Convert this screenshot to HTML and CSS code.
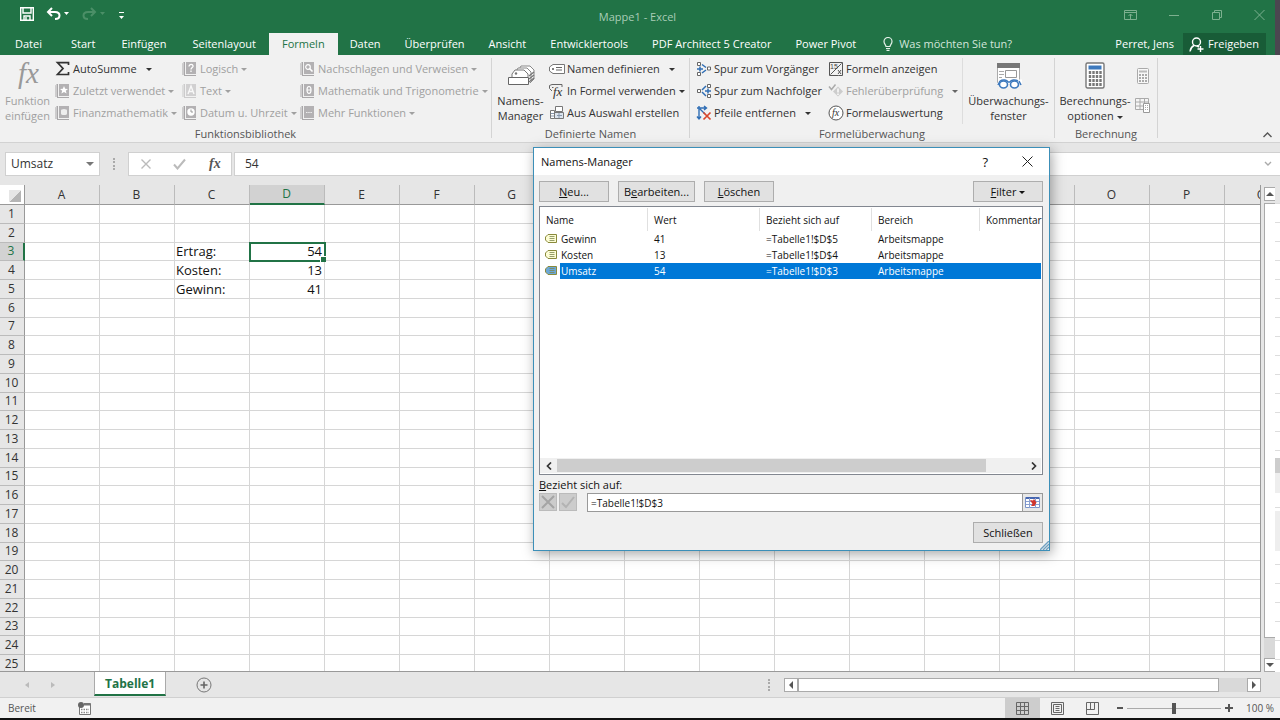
FILE: index.html
```html
<!DOCTYPE html>
<html lang="de">
<head>
    <meta charset="UTF-8">
    <meta name="viewport" content="width=device-width, initial-scale=1">
    <title>Mappe1 - Excel</title>
    <link rel="stylesheet" href="styles.css">
</head>
<body>

<svg class="defs" aria-hidden="true">
    <symbol id="book" viewBox="0 0 16 16">
        <path d="M2.500 1v14M1 2.500V14" stroke="#a9a7a9" fill="none"/>
        <path d="M1 2.500L2.500 1M2 14.500h12" stroke="#a9a7a9" fill="none"/>
        <path d="M4 1h10v12H4z" fill="#b3b1b3"/>
    </symbol>
    <symbol id="tag" viewBox="0 0 16 16">
        <path d="M4 3.500h11.500v9H4L.5 10V6z" fill="#fff" stroke="#777"/>
        <path d="M7 6.500h6M7 9h6" stroke="#666"/>
        <circle cx="4" cy="8" r="1" fill="#555"/>
    </symbol>
    <symbol id="name" viewBox="0 0 14 12">
        <path d="M4 1.500h8.500v8H4L1.500 7V4z" fill="currentColor" stroke="#8a8a3c"/>
        <path d="M5.500 3.500h5M5.500 5.500h5M5.500 7.500h5" stroke="#7c8650" stroke-width=".8"/>
    </symbol>
</svg>

<header class="title">
    <div class="quick">
        <button title="Speichern"><svg width="14" height="14" viewBox="0 0 14 14"><path d="M.7.700h12.600v12.600H.7z M3 1v5h8V1 M4 13V9h6v4 M6 10v3" fill="none" stroke="#fff" stroke-width="1.400"/></svg></button>
        <button title="Rückgängig"><svg width="24" height="14" viewBox="0 0 24 14"><path d="M6 1L2 5l4 4M2 5h7c6 0 6 7 0 7" fill="none" stroke="#fff" stroke-width="2"/><path d="M18 5h5l-2.500 3z" fill="#fff"/></svg></button>
        <button title="Wiederholen"><svg width="24" height="14" viewBox="0 0 24 14"><path d="M9 1l4 4-4 4M13 5H6c-6 0-6 7 0 7" fill="none" stroke="#4b8f67" stroke-width="2"/><path d="M18 5h5l-2.500 3z" fill="#4b8f67"/></svg></button>
        <button title="Anpassen"><svg width="7" height="8" viewBox="0 0 7 8"><path d="M1 .5h5" stroke="#fff"/><path d="M1 4h5L3.500 7z" fill="#fff"/></svg></button>
    </div>
    <h1>Mappe1 - Excel</h1>
    <div class="wincontrols">
        <button title="Menüband"><svg width="13" height="12" viewBox="0 0 13 12"><path d="M.5 1.500h12v9H.5zM.5 3.500h12M6.500 10V5M4.500 7l2-2 2 2" fill="none" stroke="#7db08f"/></svg></button>
        <button title="Minimieren"><svg width="11" height="12" viewBox="0 0 11 12"><path d="M0 6.500h10" stroke="#7db08f"/></svg></button>
        <button title="Wiederherstellen"><svg width="10" height="12" viewBox="0 0 10 12"><path d="M.5 3.500h7v7h-7zM2.500 3.500v-2h7v7h-2" fill="none" stroke="#7db08f"/></svg></button>
        <button title="Beenden"><svg width="11" height="12" viewBox="0 0 11 12"><path d="M.5 1l10 10M10.500 1l-10 10" stroke="#7db08f"/></svg></button>
    </div>
</header>

<nav class="tabs">
    <a href="#" class="file">Datei</a>
    <a href="#">Start</a>
    <a href="#">Einfügen</a>
    <a href="#">Seitenlayout</a>
    <a href="#" class="active">Formeln</a>
    <a href="#">Daten</a>
    <a href="#">Überprüfen</a>
    <a href="#">Ansicht</a>
    <a href="#">Entwicklertools</a>
    <a href="#">PDF Architect 5 Creator</a>
    <a href="#">Power Pivot</a>
    <a href="#" class="tell"><svg width="10" height="14" viewBox="0 0 10 14"><path d="M3 9.500C3 8 1 7 1 4.500a4 4 0 0 1 8 0C9 7 7 8 7 9.500zM3 11.500h4M3.500 13.300h3" fill="none" stroke="#e3f0e8" stroke-width="1.200"/></svg>Was möchten Sie tun?</a>
    <a href="#" class="user">Perret, Jens</a>
    <button class="share"><svg width="15" height="15" viewBox="0 0 15 15"><circle cx="7.500" cy="5" r="4" fill="none" stroke="#fff" stroke-width="1.400"/><path d="M1 14.500C1.500 11 3 9.500 5 8.500M8 9l2 1M11.500 9v6M8.500 12h6" fill="none" stroke="#fff" stroke-width="1.400"/></svg>Freigeben</button>
</nav>

<div class="ribbon">
    <section class="group library">
        <div class="items">
            <button class="big off">
                <svg width="26" height="30" viewBox="0 0 26 30"><text x="3" y="22" class="fx-big">fx</text></svg>
                <span>Funktion<br>einfügen</span>
            </button>
            <div class="col c1">
                <button class="cmd"><svg viewBox="0 0 16 16"><path d="M13.500 4V1.700H2.500L8 7.500l-5.500 6h11V11" fill="none" stroke="#333" stroke-width="1.700"/></svg>AutoSumme<i class="far"></i></button>
                <button class="cmd off"><svg viewBox="0 0 16 16"><use href="#book"/><path d="M9 3l1.200 2.700 2.800.2-2.200 1.800.8 2.800L9 9l-2.600 1.500.8-2.800L5 5.900l2.800-.2z" fill="#fff"/></svg>Zuletzt verwendet<i></i></button>
                <button class="cmd off"><svg viewBox="0 0 16 16"><use href="#book"/><path d="M6 5.500a3 1.500 0 0 1 6 0v3a3 1.500 0 0 1-6 0z" fill="#eee"/></svg>Finanzmathematik<i></i></button>
            </div>
            <div class="col c2">
                <button class="cmd off"><svg viewBox="0 0 16 16"><use href="#book"/><path d="M7 5.500c0-3 4.500-2.500 4 0-.3 1-2 1.300-2 3M9 9.500v1.500" fill="none" stroke="#fff" stroke-width="1.300"/></svg>Logisch<i></i></button>
                <button class="cmd off"><svg viewBox="0 0 16 16" opacity=".5"><use href="#book"/><path d="M6 11l3-8 3 8M7 8.500h4" fill="none" stroke="#fff" stroke-width="1.400"/></svg>Text<i></i></button>
                <button class="cmd off"><svg viewBox="0 0 16 16"><use href="#book"/><circle cx="9" cy="7" r="3.700" fill="#fff"/><path d="M9 4.500V7h2" fill="none" stroke="#999"/></svg>Datum u. Uhrzeit<i></i></button>
            </div>
            <div class="col">
                <button class="cmd off"><svg viewBox="0 0 16 16"><use href="#book"/><circle cx="8" cy="6" r="2.300" fill="none" stroke="#fff" stroke-width="1.200"/><path d="M9.500 7.500l3 3" stroke="#fff" stroke-width="1.600"/></svg>Nachschlagen und Verweisen<i></i></button>
                <button class="cmd off"><svg viewBox="0 0 16 16"><use href="#book"/><ellipse cx="9" cy="7" rx="2" ry="3.500" fill="none" stroke="#fff" stroke-width="1.200"/><path d="M7 7h4" stroke="#fff"/></svg>Mathematik und Trigonometrie<i></i></button>
                <button class="cmd off"><svg viewBox="0 0 16 16"><use href="#book"/><path d="M6 7.500h6" stroke="#eee" stroke-width="1.200" stroke-dasharray="1.500 .7"/></svg>Mehr Funktionen<i></i></button>
            </div>
        </div>
        <h2>Funktionsbibliothek</h2>
    </section>

    <section class="group names">
        <div class="items">
            <button class="big">
                <svg width="28" height="30" viewBox="0 0 28 30"><path d="M11 10l3-5h9l4 4v9l-4 4" fill="#fff" stroke="#888"/><path d="M8 12l3-5h9l4 4v9" fill="#fff" stroke="#888"/><path d="M5 16v-3l3-4h9l4 4v3" fill="#fff" stroke="#777"/><path d="M22 15l5-4M22 18l5-4M22 21l5-4" stroke="#777" stroke-width="1.400"/><path d="M1.500 16.500h20v7h-20z" fill="#fff" stroke="#666"/><circle cx="9" cy="12.500" r="1.200" fill="#777"/></svg>
                <span>Namens-<br>Manager</span>
            </button>
            <div class="col">
                <button class="cmd"><svg viewBox="0 0 16 16"><use href="#tag"/></svg>Namen definieren<i class="far"></i></button>
                <button class="cmd"><svg viewBox="0 0 16 16"><path d="M3 8L.5 5.500v-3L3 1.500h10V4M3 4.500h1.500" fill="none" stroke="#666"/><text x="4" y="13" class="fx">fx</text></svg>In Formel verwenden<i></i></button>
                <button class="cmd"><svg viewBox="0 0 16 16"><path d="M6.500 1.500h7v5h-7zM1.500 5.500h4v8h-4z" fill="#fff" stroke="#777"/><path d="M5.500 7.500h9v6h-9z" fill="#dce4ee" stroke="#777"/><path d="M2 8.500h3M2 11h3M8 10.500h5M10 8v5" stroke="#8898ad"/></svg>Aus Auswahl erstellen</button>
            </div>
        </div>
        <h2>Definierte Namen</h2>
    </section>

    <section class="group audit">
        <div class="items">
            <div class="col c3">
                <button class="cmd"><svg viewBox="0 0 16 16"><path d="M1.500 1.500h3v3h-3zM1.500 11.500h3v3h-3zM11.500 6h3v3h-3z" fill="#fff" stroke="#666"/><path d="M1 8h6M4 5.500v5M6 3.500l4 3M6 12l4-3" stroke="#2f6eb5" stroke-width="1.500"/></svg>Spur zum Vorgänger</button>
                <button class="cmd"><svg viewBox="0 0 16 16"><path d="M1.500 6.500h3v3h-3zM11.500 1.500h3v3h-3zM11.500 11.500h3v3h-3z" fill="#fff" stroke="#666"/><path d="M9 8h6M12 5.500v5M6 7l4-4M6 9l4 4" stroke="#2f6eb5" stroke-width="1.500"/></svg>Spur zum Nachfolger</button>
                <button class="cmd"><svg viewBox="0 0 16 16"><path d="M1 3h9M8 1l2.500 2L8 5M3 1v13M1 11.500L3 14l2-2.500M4 4l5 5" fill="none" stroke="#2f6eb5" stroke-width="1.400"/><path d="M7.500 7.500l7 7M14.500 7.500l-7 7" stroke="#d9472b" stroke-width="1.700"/></svg>Pfeile entfernen<i class="far"></i></button>
            </div>
            <div class="col c4">
                <button class="cmd"><svg viewBox="0 0 16 16"><path d="M1.500 1.500h13v13h-4M1.500 1.500v13h9M2.500 13.500l11-11" fill="none" stroke="#555"/><text x="2" y="8" class="tiny">15</text><path d="M10 9l3 4M13 9l-3 4" stroke="#555"/></svg>Formeln anzeigen</button>
                <button class="cmd off"><svg viewBox="0 0 16 16"><path d="M10 3.500l5 5-5 5-5-5z" fill="#ccc"/><path d="M10 5.500v4M10 10.500v1.500" stroke="#fff" stroke-width="1.400"/><path d="M1 3.500l2.500 3 4-5" fill="none" stroke="#aaa" stroke-width="1.500"/></svg>Fehlerüberprüfung<i class="far dark"></i></button>
                <button class="cmd"><svg viewBox="0 0 16 16"><circle cx="8" cy="8" r="7" fill="#fff" stroke="#555"/><text x="4" y="11" class="fx small">fx</text></svg>Formelauswertung</button>
            </div>
            <button class="big watch">
                <svg width="28" height="30" viewBox="0 0 28 30"><path d="M2.500 3.500h22v18h-22z" fill="#fff" stroke="#aaa"/><path d="M2 2h23v5H2z" fill="#777"/><path d="M4 10.500h5M4 13.500h5M4 16.500h3" stroke="#aaa"/><path d="M10.500 9.500h11v7h-11z" fill="#fff" stroke="#999"/><path d="M3 20.500h24" stroke="#fff" stroke-width="4"/><path d="M5 20c3-2 7-1 8 1h2c1-2 5-3 8-1M5 20l-2 4M26 24l-2-4" fill="none" stroke="#3d79bd" stroke-width="1.500"/><ellipse cx="8.500" cy="23.500" rx="4" ry="3.500" fill="#fff" stroke="#3d79bd" stroke-width="1.600"/><ellipse cx="19.500" cy="23.500" rx="4" ry="3.500" fill="#fff" stroke="#3d79bd" stroke-width="1.600"/></svg>
                <span>Überwachungs-<br>fenster</span>
            </button>
        </div>
        <h2>Formelüberwachung</h2>
    </section>

    <section class="group calc">
        <div class="items">
            <button class="big">
                <svg width="20" height="30" viewBox="0 0 20 30"><rect x="1" y="2" width="18" height="25" rx="1.500" fill="#fff" stroke="#777" stroke-width="1.400"/><path d="M3.500 4.500h13v4h-13z" fill="#3d79bd"/><path d="M5 10v15M8.500 10v15M12 10v15M15.500 10v15" stroke="#777" stroke-width="2.400" stroke-dasharray="3 1"/></svg>
                <span>Berechnungs-<br>optionen<i></i></span>
            </button>
            <div class="col minis">
                <button title="Neu berechnen"><svg width="12" height="16" viewBox="0 0 12 16"><rect x=".5" y=".5" width="11" height="15" rx="1" fill="#f8f8f8" stroke="#aaa"/><path d="M2 3.500h8" stroke="#bbb" stroke-width="2"/><path d="M3 6v8M6 6v8M9 6v8" stroke="#aaa" stroke-width="2" stroke-dasharray="2 1"/></svg></button>
                <button title="Blatt berechnen"><svg width="15" height="15" viewBox="0 0 15 15"><path d="M.5.500h13v11H.5zM.5 4h13M5 .5v11M9.500.500v11M.5 8h13" fill="#f5f5f5" stroke="#aaa"/><path d="M8.500 5.500h6v9h-6z" fill="#fff" stroke="#999"/><path d="M10.500 7v6M12.500 7v6" stroke="#aaa" stroke-dasharray="1 1"/></svg></button>
            </div>
        </div>
        <h2>Berechnung</h2>
    </section>
    <button class="collapse" title="Menüband reduzieren"><svg width="9" height="6" viewBox="0 0 9 6"><path d="M.5 5l4-4 4 4" fill="none" stroke="#555" stroke-width="1.400"/></svg></button>
</div>

<div class="formulabar">
    <div class="namebox">
        <input type="text" value="Umsatz" aria-label="Namenfeld"><i></i>
    </div>
    <span class="dots"></span>
    <div class="fbuttons">
        <button title="Abbrechen"><svg width="12" height="12" viewBox="0 0 12 12"><path d="M1.500 1.500l9 9M10.500 1.500l-9 9" stroke="#bbb" stroke-width="1.400"/></svg></button>
        <button title="Eingeben"><svg width="13" height="12" viewBox="0 0 13 12"><path d="M1 6.500l3.500 4L12 1.500" fill="none" stroke="#bbb" stroke-width="2"/></svg></button>
        <button title="Funktion einfügen"><svg width="14" height="16" viewBox="0 0 14 16"><text x="2" y="12" class="fx strong">fx</text></svg></button>
    </div>
    <div class="formula">
        <input type="text" value="54" aria-label="Bearbeitungsleiste">
        <svg width="8" height="6" viewBox="0 0 8 6"><path d="M1 1l3 3 3-3" fill="none" stroke="#aaa" stroke-width="1.400"/></svg>
    </div>
</div>

<main class="sheet">
    <div class="cells">
        <table id="grid"></table>
    </div>
    <div class="vscroll">
        <button title="Nach oben"><svg width="8" height="4" viewBox="0 0 8 4"><path d="M0 4h8L4 0z" fill="#555"/></svg></button>
        <div class="thumb"></div>
        <div class="track"></div>
        <button title="Nach unten"><svg width="8" height="4" viewBox="0 0 8 4"><path d="M0 0h8L4 4z" fill="#555"/></svg></button>
    </div>
    <div class="behind"></div>
</main>

<div class="sheettabs">
    <button class="nav" title="Zurück"><svg width="4" height="6" viewBox="0 0 4 6"><path d="M4 0v6L0 3z" fill="#bbb"/></svg></button>
    <button class="nav" title="Weiter"><svg width="4" height="6" viewBox="0 0 4 6"><path d="M0 0v6l4-3z" fill="#bbb"/></svg></button>
    <a href="#" class="current">Tabelle1</a>
    <button class="add" title="Neues Blatt"><svg width="16" height="16" viewBox="0 0 16 16"><circle cx="8" cy="8" r="7" fill="none" stroke="#777"/><path d="M8 4.500v7M4.500 8h7" stroke="#666" stroke-width="1.600"/></svg></button>
    <span class="dots"></span>
    <div class="hscroll">
        <button title="Nach links"><svg width="4" height="8" viewBox="0 0 4 8"><path d="M4 0v8L0 4z" fill="#555"/></svg></button>
        <div class="thumb"></div>
        <div class="track"></div>
        <button title="Nach rechts"><svg width="4" height="8" viewBox="0 0 4 8"><path d="M0 0v8l4-4z" fill="#555"/></svg></button>
    </div>
</div>

<footer class="status">
    <span>Bereit</span>
    <svg class="macro" width="13" height="13" viewBox="0 0 13 13"><path d="M1.500 5v7.500h11V1.500H6" fill="#fff" stroke="#777"/><path d="M6 2.500h6.500" stroke="#777" stroke-width="2"/><path d="M3 7.500h8M3 10.500h8" stroke="#888" stroke-width="1.500" stroke-dasharray="1.500 1"/><circle cx="3" cy="3" r="3" fill="#666"/></svg>
    <div class="views">
        <button class="on" title="Normal"><svg width="13" height="13" viewBox="0 0 13 13"><path d="M.5.500h12v12H.5zM.5 4.500h12M.5 8.500h12M4.500.500v12M8.500.500v12" fill="none" stroke="#666"/></svg></button>
        <button title="Seitenlayout"><svg width="13" height="13" viewBox="0 0 13 13"><path d="M.5.500h12v12H.5zM2.500 2.500h8v8h-8zM4.500 4.500h4M4.500 6.500h4M4.500 8.500h4" fill="none" stroke="#666"/></svg></button>
        <button title="Umbruchvorschau"><svg width="13" height="13" viewBox="0 0 13 13"><path d="M.5.500h12v12H.5zM4.500.500v7M8.500.500v7M.5 7.500h8" fill="none" stroke="#666"/></svg></button>
    </div>
    <button class="zoom" title="Verkleinern"><svg width="7" height="8" viewBox="0 0 7 8"><path d="M1 4h6" stroke="#555" stroke-width="2"/></svg></button>
    <input class="slider" type="range" min="0" max="100" value="50" aria-label="Zoom">
    <button class="zoom" title="Vergrößern"><svg width="8" height="8" viewBox="0 0 8 8"><path d="M0 4h8M4 0v8" stroke="#555" stroke-width="2"/></svg></button>
    <span class="percent">100 %</span>
</footer>

<div class="dialog" role="dialog" aria-label="Namens-Manager">
    <div class="dhead">
        <span>Namens-Manager</span>
        <button class="help" title="Hilfe">?</button>
        <button title="Schließen"><svg width="11" height="11" viewBox="0 0 11 11"><path d="M.5.500l10 10M10.500.500l-10 10" stroke="#222"/></svg></button>
    </div>
    <div class="dbody">
        <div class="dbuttons">
            <button class="btn"><u>N</u>eu...</button>
            <button class="btn wide">B<u>e</u>arbeiten...</button>
            <button class="btn"><u>L</u>öschen</button>
            <button class="btn filter"><u>F</u>ilter<i></i></button>
        </div>
        <div class="list">
            <table>
                <thead>
                    <tr><th class="w1">Name</th><th class="w2">Wert</th><th class="w2">Bezieht sich auf</th><th class="w1">Bereich</th><th>Kommentar</th></tr>
                </thead>
                <tbody>
                    <tr><td><svg width="14" height="12"><use href="#name"/></svg><span>Gewinn</span></td><td>41</td><td>=Tabelle1!$D$5</td><td>Arbeitsmappe</td><td></td></tr>
                    <tr><td><svg width="14" height="12"><use href="#name"/></svg><span>Kosten</span></td><td>13</td><td>=Tabelle1!$D$4</td><td>Arbeitsmappe</td><td></td></tr>
                    <tr class="sel"><td><svg width="14" height="12"><use href="#name"/></svg><span>Umsatz</span></td><td>54</td><td>=Tabelle1!$D$3</td><td>Arbeitsmappe</td><td></td></tr>
                </tbody>
            </table>
            <div class="dscroll">
                <svg width="6" height="8" viewBox="0 0 6 8"><path d="M5 .5L1.500 4 5 7.500" fill="none" stroke="#333" stroke-width="1.700"/></svg>
                <div class="thumb"></div>
                <svg width="6" height="8" viewBox="0 0 6 8"><path d="M1 .5L4.500 4 1 7.500" fill="none" stroke="#333" stroke-width="1.700"/></svg>
            </div>
        </div>
        <label for="ref"><u>B</u>ezieht sich auf:</label>
        <div class="refrow">
            <button class="sq" disabled title="Verwerfen"><svg width="14" height="14" viewBox="0 0 14 14"><path d="M1 1l12 12M13 1L1 13" stroke="#a4a4a4" stroke-width="2"/></svg></button>
            <button class="sq" disabled title="Übernehmen"><svg width="14" height="14" viewBox="0 0 14 14"><path d="M1 8l4 4 8-10" fill="none" stroke="#b3b3b3" stroke-width="2"/></svg></button>
            <div class="ref">
                <input id="ref" type="text" value="=Tabelle1!$D$3">
                <button title="Bereich wählen"><svg width="15" height="13" viewBox="0 0 15 13"><path d="M.5 1.500h14v10H.5z" fill="#fff" stroke="#7b93c9"/><path d="M1 2h13" stroke="#4666b0" stroke-width="2"/><path d="M1 5.500h13M1 8.500h13M4.500 2v10M10.500 2v10" stroke="#8aa0d0"/><path d="M5 4l3 .5L9 3l2.500 3.500L9.500 10H6l1.500-2z" fill="#d0342c"/></svg></button>
            </div>
        </div>
        <button class="btn close">Schließen</button>
    </div>
    <svg class="grip" width="9" height="9" viewBox="0 0 9 9"><path d="M0 9l9-9M3 9l6-6M6 9l3-3" stroke="#6f9fc0" stroke-width="1.400"/></svg>
</div>

<script src="grid.js"></script>
</body>
</html>
```
FILE: styles.css
```css
* {
    box-sizing: border-box;
}

body {
    margin: 0;
    height: 100vh;
    display: flex;
    flex-direction: column;
    overflow: hidden;
    border-bottom: 2px solid #111;
    background: #e6e6e6;
    color: #333;
    font: 11px/16px "Open Sans", "Noto Sans", sans-serif;
}

button, input {
    margin: 0;
    padding: 0;
    border: 0;
    background: none;
    color: inherit;
    font: inherit;
}

button svg, a svg {
    display: block;
    flex: none;
}

a {
    color: inherit;
    text-decoration: none;
}

h1, h2 {
    margin: 0;
    font-size: 11px;
    font-weight: normal;
}

/* drop-down arrow */
i {
    display: inline-block;
    flex: none;
    margin-left: 3px;
    border: 3px solid transparent;
    border-top-color: currentColor;
    border-bottom: 0;
    vertical-align: middle;
}

.defs {
    position: absolute;
    width: 0;
    height: 0;
}

.fx, .fx-big {
    font: italic 13px "Liberation Serif", serif;
    fill: #333;
}

.fx-big {
    font-size: 29px;
    fill: #999;
}

.fx.small {
    font-size: 10px;
}

.fx.strong {
    font-size: 14px;
    font-weight: bold;
    fill: #555;
}

.tiny {
    font: 7px "Liberation Sans", sans-serif;
    fill: #444;
}

/* title bar */
.title {
    display: grid;
    grid-template-columns: 1fr auto 1fr;
    align-items: center;
    flex: none;
    height: 33px;
    background: #217346;
    border-right: 5px solid #4b4650;
}

.title h1 {
    color: #a9cdb7;
}

.quick {
    display: flex;
    align-items: center;
    gap: 12px;
    padding: 0 0 6px 20px;
}

.quick button:last-child {
    margin-top: 4px;
}

.wincontrols {
    display: flex;
    justify-content: flex-end;
    gap: 32px;
    padding: 0 10px 4px 0;
}

/* ribbon tabs */
.tabs {
    display: flex;
    flex: none;
    height: 22px;
    background: #217346;
    border-right: 5px solid #4b4650;
    color: #fff;
    line-height: 22px;
    white-space: nowrap;
}

.tabs a {
    padding: 0 13px;
}

.tabs .file {
    padding: 0 16px 0 15px;
}

.tabs .active {
    background: #f1f1f1;
    color: #217346;
}

.tabs .active ~ a {
    padding: 0 12px;
}

.tabs .active ~ .tell {
    display: flex;
    align-items: center;
    gap: 6px;
    padding-left: 15px;
    color: #d3e6db;
}

.tabs .active ~ .user {
    margin-left: auto;
    padding: 0 9px;
}

.share {
    display: flex;
    align-items: center;
    gap: 4px;
    margin-right: 9px;
    padding: 0 7px 0 6px;
    background: #185c37;
}

/* ribbon */
.ribbon {
    display: flex;
    flex: none;
    height: 88px;
    padding-top: 3px;
    background: #f1f1f1;
    border-bottom: 1px solid #d2d2d2;
    white-space: nowrap;
}

.group {
    display: flex;
    flex-direction: column;
    flex: none;
    height: 80px;
    border-right: 1px solid #d4d4d4;
}

.group h2 {
    margin-top: 1px;
    color: #555;
    line-height: 18px;
    text-align: center;
}

.items {
    display: flex;
    flex: none;
    height: 66px;
}

.col {
    flex: none;
}

.library {
    width: 492px;
}

.names {
    width: 198px;
}

.audit {
    width: 365px;
}

.calc {
    width: 103px;
}

.c1 {
    width: 127px;
}

.c2 {
    width: 118px;
}

.c3 {
    width: 132px;
}

.c4 {
    width: 135px;
    border-right: 1px solid #ddd;
}

.audit .items {
    padding-left: 6px;
}

.big {
    display: flex;
    flex: none;
    flex-direction: column;
    align-items: center;
    width: 55px;
    padding-top: 3px;
    line-height: 15px;
}

.names .big {
    width: 57px;
}

.big svg {
    margin-bottom: 2px;
}

.audit .watch {
    width: 91px;
}

.calc .big {
    width: 80px;
}

.cmd {
    display: flex;
    align-items: center;
    height: 22px;
}

.cmd svg {
    width: 16px;
    height: 16px;
    margin-right: 2px;
}

.cmd i.far {
    margin-left: 9px;
}

.off {
    color: #a0a0a0;
}

i.dark {
    color: #666;
}

.minis {
    display: flex;
    flex-direction: column;
    align-items: center;
    gap: 14px;
    padding-top: 10px;
}

.collapse {
    align-self: flex-end;
    margin: 0 8px 4px auto;
}

/* formula bar */
.formulabar {
    display: flex;
    flex: none;
    height: 42px;
    padding: 9px 0 9px 5px;
    font-size: 12px;
}

.namebox, .fbuttons, .formula {
    display: flex;
    align-items: center;
    background: #fff;
    border: 1px solid #d0d0d0;
}

.namebox {
    width: 95px;
    padding: 0 5px;
}

.namebox input {
    flex: 1;
    min-width: 0;
}

.namebox i {
    border-width: 4px;
    border-bottom: 0;
    color: #777;
}

.dots {
    width: 2px;
    height: 12px;
    margin: 6px 13px;
    border-left: 2px dotted #aaa;
}

.fbuttons {
    justify-content: space-around;
    width: 104px;
}

.formula {
    flex: 1;
    margin-left: 2px;
    padding: 0 8px 0 10px;
    border-right: 0;
}

.formula input {
    flex: 1;
}

/* cells */
.sheet {
    display: flex;
    flex: 1;
    min-height: 0;
}

.cells {
    flex: 1;
    min-width: 0;
    overflow: hidden;
    background: #fff;
    border-right: 1px solid #999;
    border-bottom: 1px solid #999;
}

/* the last row runs a little under the tab bar */
#grid {
    height: calc(100% + 3px);
    table-layout: fixed;
    width: 1300px;
    border-collapse: separate;
    border-spacing: 0;
    color: #111;
    font-size: 13px;
    line-height: 16px;
}

#grid th, #grid td {
    width: 75px;
    padding: 0 2px 0 1px;
    border-right: 1px solid #d6d6d6;
    border-bottom: 1px solid #d6d6d6;
    text-align: left;
}

#grid th {
    background: #e6e6e6;
    border-color: #bbb;
    color: #333;
    font-size: 12px;
    font-weight: normal;
    text-align: center;
}

#grid thead th {
    height: 20px;
    border-bottom-color: #999;
}

#grid th:first-child {
    width: 25px;
    border-right-color: #999;
}

#grid th.corner {
    background: linear-gradient(135deg, transparent 50%, #b5b5b5 50%) content-box #e6e6e6;
    background-color: #e6e6e6;
    background-clip: content-box, border-box;
    padding: 5px 3px 2px 9px;
    background: linear-gradient(135deg, #e6e6e6 50%, #b5b5b5 50%) content-box;
}

#grid th.on {
    background: #d2d2d2;
    color: #217346;
}

#grid thead th.on {
    border-bottom: 2px solid #217346;
}

#grid tbody th.on {
    border-right: 2px solid #217346;
}

#grid td.num {
    text-align: right;
}

#grid td.selected {
    position: relative;
    outline: 2px solid #217346;
    outline-offset: -1px;
}

#grid td.selected::after {
    content: "";
    position: absolute;
    right: -2px;
    bottom: -2px;
    width: 5px;
    height: 5px;
    background: #217346;
    border: 1px solid #fff;
    border-width: 1px 0 0 1px;
}

.vscroll {
    display: flex;
    flex-direction: column;
    width: 14px;
    padding: 2px 0 0 3px;
}

.vscroll button, .vscroll .thumb {
    background: #fff;
    border: 1px solid #aaa;
    border-right: 0;
}

.vscroll button {
    display: grid;
    place-items: center;
    height: 14px;
}

.vscroll .thumb {
    flex: 1;
    margin-top: 2px;
}

.vscroll .track {
    height: 20px;
    background: #d9d9d9;
}

.behind {
    width: 5px;
    background: linear-gradient(#e6e6e6 18px, transparent 18px 273px, #cdcdcd 273px 288px, #eee 288px 308px, transparent 308px 326px, #eee 326px 366px, transparent 366px), repeating-linear-gradient(#fff 0 18px, #ddd 18px 19px);
}

/* sheet tabs */
.sheettabs {
    display: flex;
    align-items: center;
    flex: none;
    height: 26px;
    padding-left: 25px;
    border-bottom: 1px solid #d0d0d0;
}

.sheettabs .nav {
    width: 4px;
    margin-right: 22px;
}

.current {
    align-self: flex-start;
    height: 24px;
    margin-left: 17px;
    padding: 0 10px;
    background: #fff;
    border: 1px solid #aaa;
    border-width: 0 1px 2px;
    border-bottom-color: #217346;
    color: #217346;
    font-size: 12px;
    font-weight: bold;
    line-height: 24px;
}

.add {
    margin-left: 30px;
}

.sheettabs .dots {
    margin: 0 14px 0 auto;
}

.hscroll {
    display: flex;
    width: 38%;
    height: 14px;
    margin-right: 19px;
    background: #d9d9d9;
}

.hscroll button, .hscroll .thumb {
    background: #fff;
    border: 1px solid #aaa;
}

.hscroll button {
    display: grid;
    place-items: center;
    width: 14px;
}

.hscroll .thumb {
    flex: 1;
}

.hscroll .track {
    width: 28px;
}

/* status bar */
.status {
    display: flex;
    align-items: center;
    flex: none;
    height: 20px;
    padding: 0 6px 0 8px;
    background: #f1f1f1;
    color: #555;
    font-size: 10px;
}

.macro {
    margin-left: 42px;
}

.views {
    display: flex;
    align-self: stretch;
    margin-left: auto;
}

.views button {
    display: grid;
    place-items: center;
    width: 35px;
}

.views .on {
    background: #cdcdcd;
}

.zoom {
    margin: 0 4px;
}

.views + .zoom {
    margin-left: 6px;
}

.slider {
    appearance: none;
    width: 94px;
    height: 11px;
    background: linear-gradient(#aaa, #aaa) center / 100% 1px no-repeat;
}

.slider::-webkit-slider-thumb {
    appearance: none;
    width: 4px;
    height: 11px;
    background: #555;
}

.percent {
    margin-left: 9px;
}

/* name manager */
.dialog {
    position: absolute;
    left: 533px;
    top: 147px;
    width: 517px;
    background: #f0f0f0;
    border: 1px solid #3c8fb8;
    box-shadow: 2px 3px 12px rgba(0, 0, 0, .35);
    color: #111;
}

.dhead {
    display: flex;
    align-items: center;
    height: 27px;
    padding: 0 16px 0 7px;
    background: #fff;
}

.dhead .help {
    margin: 0 34px 0 auto;
    font-size: 13px;
}

.dbody {
    display: flex;
    flex-direction: column;
    padding: 6px 6px 7px 5px;
}

.dbuttons {
    display: flex;
    gap: 9px;
}

.btn {
    width: 70px;
    height: 21px;
    background: #e1e1e1;
    border: 1px solid #adadad;
}

.btn.wide {
    width: 77px;
}

.btn.filter {
    margin-left: auto;
}

.list {
    display: flex;
    flex-direction: column;
    justify-content: space-between;
    height: 269px;
    margin-top: 4px;
    padding: 1px 1px 1px 0;
    background: #fff;
    border: 1px solid #828790;
    font-size: 10px;
}

.list table {
    width: 100%;
    table-layout: fixed;
    border-spacing: 0;
    white-space: nowrap;
}

.list th {
    height: 23px;
    padding: 0 0 0 6px;
    border-right: 1px solid #e0e0e0;
    font-weight: normal;
    text-align: left;
}

.list th:last-child {
    border: 0;
}

.w1 {
    width: 108px;
}

.w2 {
    width: 112px;
}

.list td {
    height: 16px;
    padding: 0 0 0 6px;
    line-height: 16px;
}

.list td:first-child {
    display: flex;
    align-items: center;
    padding-left: 4px;
}

.list td svg {
    margin-right: 3px;
    color: #fdfdd5;
}

.sel td {
    background: #0078d7;
    color: #fff;
}

.sel td:first-child {
    background: linear-gradient(90deg, #fff 20px, #0078d7 20px);
}

.list .sel svg {
    color: #6ba8d8;
}

.dscroll {
    display: flex;
    align-items: center;
    gap: 5px;
    height: 15px;
    padding: 0 4px 0 6px;
    background: #f0f0f0;
}

.dscroll .thumb {
    flex: 1;
    height: 13px;
    margin-right: 40px;
    background: #cdcdcd;
}

.dbody label {
    margin-top: 2px;
}

.refrow {
    display: flex;
    gap: 2px;
    height: 19px;
}

.sq {
    display: grid;
    place-items: center;
    width: 18px;
    height: 18px;
    background: #ccc;
    border: 1px solid #bbb;
}

.ref {
    display: flex;
    flex: 1;
    margin-left: 8px;
    background: #fff;
    border: 1px solid #999;
}

.ref input {
    flex: 1;
    padding-left: 3px;
    font-size: 10px;
}

.ref button {
    display: grid;
    place-items: center;
    width: 20px;
    background: #e8e8e8;
    border-left: 1px solid #999;
}

.close {
    align-self: flex-end;
    margin-top: 10px;
}

.grip {
    position: absolute;
    right: 0;
    bottom: 0;
}
```
FILE: grid.js
```js
var columns = 'ABCDEFGHIJKLMNOPQ'.split('');
var rowCount = 25;
var active = 'D3';
var values = {
    C3: 'Ertrag:', D3: 54,
    C4: 'Kosten:', D4: 13,
    C5: 'Gewinn:', D5: 41
};

function headCell(text, on) {
    return '<th' + (on ? ' class="on"' : '') + '>' + text + '</th>';
}

var html = '<thead><tr><th class="corner"></th>';
columns.forEach(function (col) {
    html += headCell(col, col === active[0]);
});
html += '</tr></thead><tbody>';

for (var row = 1; row <= rowCount; row++) {
    html += '<tr>' + headCell(row, row === Number(active.slice(1)));
    columns.forEach(function (col) {
        var value = values[col + row];
        var cls = [];
        if (typeof value === 'number') cls.push('num');
        if (col + row === active) cls.push('selected');
        html += '<td class="' + cls.join(' ') + '">' + (value === undefined ? '' : value) + '</td>';
    });
    html += '</tr>';
}

document.getElementById('grid').innerHTML = html + '</tbody>';
```
